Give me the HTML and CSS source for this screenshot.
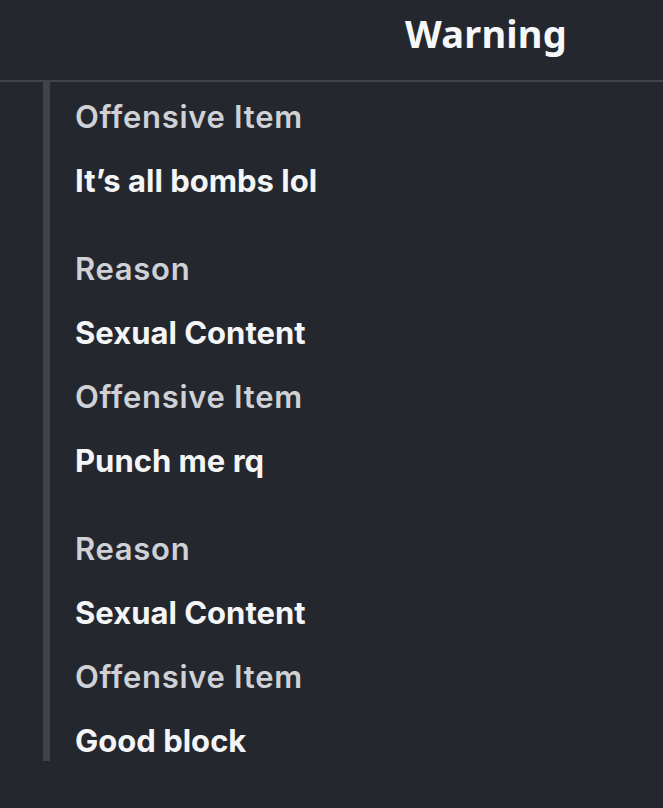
FILE: index.html
```html
<!DOCTYPE html>
<html>
<head>
<meta charset="utf-8">
<link rel="stylesheet" href="styles.css">
</head>
<body>
<div class="header"><h1 class="title">Warning</h1></div>
<div class="content">
  <div class="quote">
    <div class="field field-item">
      <div class="label">Offensive Item</div>
      <div class="value">It’s all bombs lol</div>
    </div>
    <div class="field">
      <div class="label">Reason</div>
      <div class="value">Sexual Content</div>
    </div>
    <div class="field field-item">
      <div class="label">Offensive Item</div>
      <div class="value">Punch me rq</div>
    </div>
    <div class="field">
      <div class="label">Reason</div>
      <div class="value">Sexual Content</div>
    </div>
    <div class="field">
      <div class="label">Offensive Item</div>
      <div class="value">Good block</div>
    </div>
  </div>
</div>
</body>
</html>
```
FILE: styles.css
```css
html, body {
  margin: 0;
  padding: 0;
  background: #25272f;
  height: 100%;
}
body {
  font-family: "Inter", "Noto Sans", sans-serif;
  color: #f2f3f5;
}
.header {
  height: 82px;
  border-bottom: 2px solid #41434b;
  display: flex;
  align-items: center;
  justify-content: flex-end;
  padding-right: 96px;
  box-sizing: border-box;
}
.title {
  margin: 0;
  font-family: "Noto Sans", sans-serif;
  font-size: 38px;
  font-weight: 700;
  color: #f6f7f8;
  line-height: 1;
  margin-top: -14px;
  letter-spacing: 0.2px;
}
.content {
  padding-left: 43px;
}
.quote {
  border-left: 7px solid #41434c;
  padding: 15px 0 0 25px;
  display: flex;
  flex-direction: column;
  gap: 24px;
}
.field {
  display: flex;
  flex-direction: column;
  gap: 24px;
}
.field-item {
  margin-bottom: 24px;
}
.label, .value {
  font-size: 31px;
  line-height: 40px;
  white-space: nowrap;
}
.label {
  color: #cfd1d6;
  font-weight: 600;
  letter-spacing: 0.7px;
}
.value {
  color: #f4f5f7;
  font-weight: 700;
}
```
